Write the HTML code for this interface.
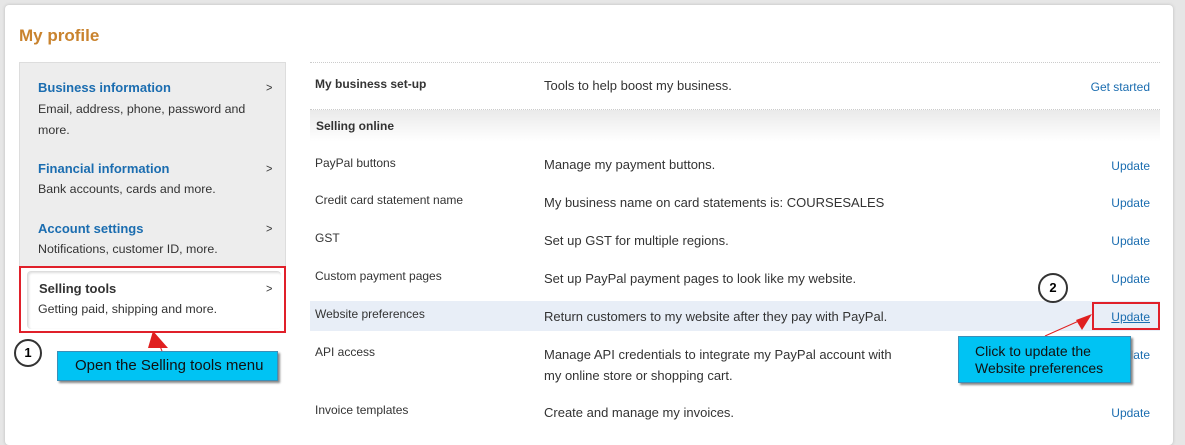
<!DOCTYPE html>
<html><head><style>
body{margin:0;width:1185px;height:428px;background:#e6e6e6;font-family:"Liberation Sans",Arial,sans-serif;position:relative;overflow:hidden}
.card{position:absolute;left:5px;top:5px;width:1168px;height:440px;background:#fff;border-radius:4px;box-shadow:0 0 3px #bbb}
.a{position:absolute;white-space:nowrap}
h1{position:absolute;left:19px;top:26px;margin:0;font-size:17px;color:#c9832e;font-weight:bold}
.side{position:absolute;left:19px;top:62px;width:267px;height:268px;background:#ededed;border:1px solid #ddd;box-sizing:border-box}
.t{font-size:13px;font-weight:bold;color:#1b6db0}
.s{font-size:12.4px;color:#333}
.lab{font-size:12px;color:#333}
.desc{font-size:13px;color:#333}
.up{font-size:12px;color:#1b6db0;right:35px}
.dot{position:absolute;left:310px;width:850px;border-top:1px dotted #ccc}
.chev{position:absolute;left:266px;font-size:11px;color:#333;transform:scaleY(1.1)}
</style></head><body>
<div class="card"></div>
<h1>My profile</h1>
<div class="side"></div>
<div class="a t" style="left:38px;top:80px">Business information</div>
<div class="a s" style="left:38px;top:102px">Email, address, phone, password and</div>
<div class="a s" style="left:38px;top:123px">more.</div>
<div class="a t" style="left:38px;top:161px">Financial information</div>
<div class="a s" style="left:38px;top:182px">Bank accounts, cards and more.</div>
<div class="a t" style="left:38px;top:221px">Account settings</div>
<div class="a s" style="left:38px;top:242px">Notifications, customer ID, more.</div>
<div class="a" style="left:19px;top:266px;width:267px;height:67px;background:#fff;border:2px solid #e0202a;box-sizing:border-box"><div style="position:absolute;left:6px;top:3px;right:3px;bottom:2px;border-left:1px solid #ddd;border-top:1px solid #ddd;border-radius:4px;box-shadow:inset 1px 1px 2px #ddd"></div></div>
<div class="a" style="left:39px;top:281px;font-size:13px;font-weight:bold;color:#333">Selling tools</div>
<div class="a s" style="left:38px;top:302px">Getting paid, shipping and more.</div>
<div class="chev" style="top:82px">&gt;</div>
<div class="chev" style="top:163px">&gt;</div>
<div class="chev" style="top:223px">&gt;</div>
<div class="chev" style="top:283px">&gt;</div>
<!-- annotation 1 -->
<div class="a" style="left:14px;top:339px;width:28px;height:28px;border:2px solid #333;border-radius:50%;box-sizing:border-box;text-align:center;line-height:24px;font-size:13px;font-weight:bold;background:#fff">1</div>
<div class="a" style="left:57px;top:351px;width:221px;height:30px;background:#00c3f3;border:1px solid #3a8fb8;box-shadow:2px 2px 2px #888;box-sizing:border-box;font-size:15px;color:#111;line-height:28px;padding-left:17px">Open the Selling tools menu</div>
<svg class="a" style="left:140px;top:330px" width="40" height="24"><line x1="15" y1="4" x2="22" y2="21" stroke="#e02020"/><polygon points="13,1 8,18 28,18" fill="#e02020"/></svg>
<!-- right -->
<div class="dot" style="top:62px"></div>
<div class="a lab" style="left:315px;top:77px;font-weight:bold">My business set-up</div>
<div class="a desc" style="left:544px;top:78px">Tools to help boost my business.</div>
<div class="a up" style="top:80px">Get started</div>
<div class="dot" style="top:109px"></div>
<div class="a" style="left:310px;top:110px;width:850px;height:32px;background:linear-gradient(#eaeaea,#fff)"></div>
<div class="a lab" style="left:316px;top:119px;font-weight:bold">Selling online</div>
<div class="a" style="left:310px;top:301px;width:850px;height:30px;background:#e8eef7"></div>
<div class="a lab" style="left:315px;top:156px">PayPal buttons</div>
<div class="a desc" style="left:544px;top:157px">Manage my payment buttons.</div>
<div class="a up" style="top:159px">Update</div>
<div class="a lab" style="left:315px;top:193px">Credit card statement name</div>
<div class="a desc" style="left:544px;top:195px">My business name on card statements is: COURSESALES</div>
<div class="a up" style="top:196px">Update</div>
<div class="a lab" style="left:315px;top:231px">GST</div>
<div class="a desc" style="left:544px;top:233px">Set up GST for multiple regions.</div>
<div class="a up" style="top:234px">Update</div>
<div class="a lab" style="left:315px;top:269px">Custom payment pages</div>
<div class="a desc" style="left:544px;top:271px">Set up PayPal payment pages to look like my website.</div>
<div class="a up" style="top:272px">Update</div>
<div class="a lab" style="left:315px;top:307px">Website preferences</div>
<div class="a desc" style="left:544px;top:309px">Return customers to my website after they pay with PayPal.</div>
<div class="a up" style="top:310px;text-decoration:underline">Update</div>
<div class="a lab" style="left:315px;top:345px">API access</div>
<div class="a desc" style="left:544px;top:347px">Manage API credentials to integrate my PayPal account with</div>
<div class="a desc" style="left:544px;top:368px">my online store or shopping cart.</div>
<div class="a up" style="top:348px">Update</div>
<div class="a lab" style="left:315px;top:403px">Invoice templates</div>
<div class="a desc" style="left:544px;top:405px">Create and manage my invoices.</div>
<div class="a up" style="top:406px">Update</div>
<!-- annotation 2 -->
<div class="a" style="left:1092px;top:302px;width:68px;height:28px;border:2px solid #e0202a;box-sizing:border-box"></div>
<div class="a" style="left:1038px;top:273px;width:30px;height:30px;border:2px solid #333;border-radius:50%;box-sizing:border-box;text-align:center;line-height:26px;font-size:13px;font-weight:bold;background:#fff">2</div>
<svg class="a" style="left:1040px;top:310px" width="60" height="30"><line x1="5" y1="26" x2="50" y2="6" stroke="#e02020"/><polygon points="52,4 36,10 42,20" fill="#e02020"/></svg>
<div class="a" style="left:958px;top:336px;width:173px;height:47px;background:#00c3f3;border:1px solid #3a8fb8;box-shadow:2px 2px 2px #888;box-sizing:border-box;font-size:14px;color:#111;line-height:17px;padding:6px 0 0 16px;white-space:normal">Click to update the Website preferences</div>
</body></html>
